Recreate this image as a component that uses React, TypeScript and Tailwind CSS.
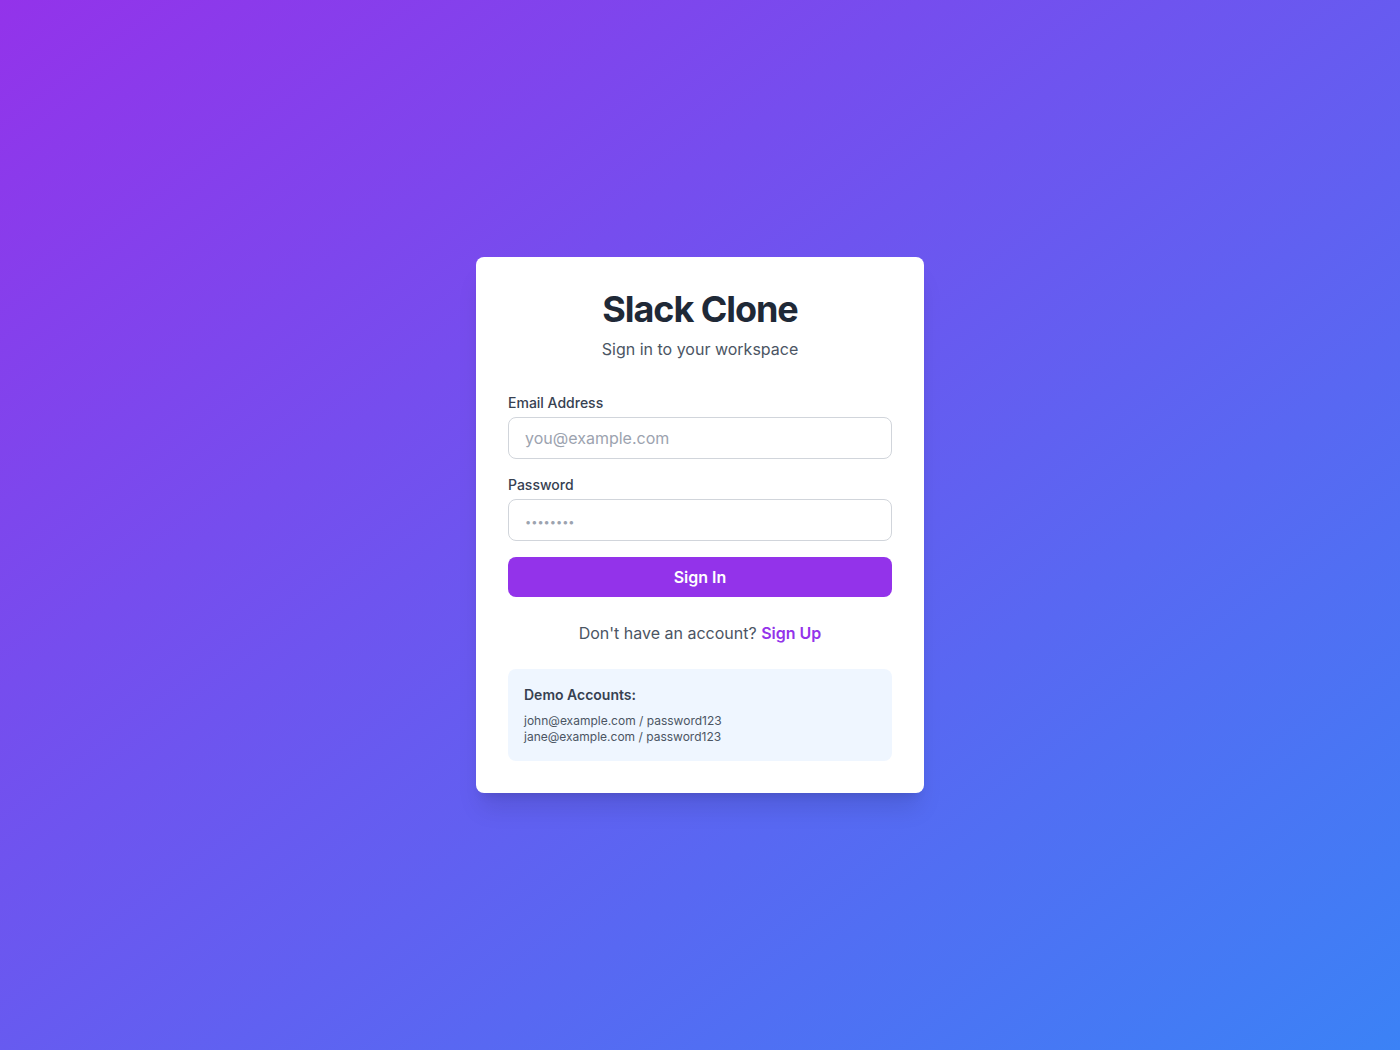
import React from "react";

export default function App() {
  return (
    <div
      className="min-h-screen flex items-center justify-center bg-linear-to-br/srgb from-[#9333ea] to-[#3b82f6]"
      style={{ fontFamily: '"Inter", "Noto Sans", sans-serif' }}
    >
      <div className="w-[448px] bg-white rounded-lg shadow-xl p-8">
        <div className="text-center mb-8">
          <h1 className="text-4xl font-bold text-[#1f2937] mb-2 tracking-[-0.03em]">Slack Clone</h1>
          <p className="text-base text-[#4b5563]">Sign in to your workspace</p>
        </div>
        <form className="space-y-4" onSubmit={(e) => e.preventDefault()}>
          <div>
            <label className="block text-sm font-medium text-[#374151] mb-1">Email Address</label>
            <input
              type="email"
              placeholder="you@example.com"
              className="w-full px-4 py-2 text-base border border-[#d1d5db] rounded-lg text-[#111827] placeholder:text-[#9ca3af] outline-none"
            />
          </div>
          <div>
            <label className="block text-sm font-medium text-[#374151] mb-1">Password</label>
            <input
              type="password"
              placeholder="••••••••"
              className="w-full px-4 py-2 text-base border border-[#d1d5db] rounded-lg text-[#111827] placeholder:text-[#9ca3af] placeholder:text-[11px] outline-none"
            />
          </div>
          <button
            type="submit"
            className="w-full py-2 text-base font-semibold text-white bg-[#9333ea] rounded-lg"
          >
            Sign In
          </button>
        </form>
        <p className="mt-6 text-center text-base text-[#4b5563]">
          Don't have an account?{" "}
          <span className="font-semibold text-[#9333ea]">Sign Up</span>
        </p>
        <div className="mt-6 p-4 bg-[#eff6ff] rounded-lg">
          <p className="text-sm font-semibold text-[#374151] mb-2">Demo Accounts:</p>
          <p className="text-xs text-[#4b5563]">john@example.com / password123</p>
          <p className="text-xs text-[#4b5563]">jane@example.com / password123</p>
        </div>
      </div>
    </div>
  );
}
